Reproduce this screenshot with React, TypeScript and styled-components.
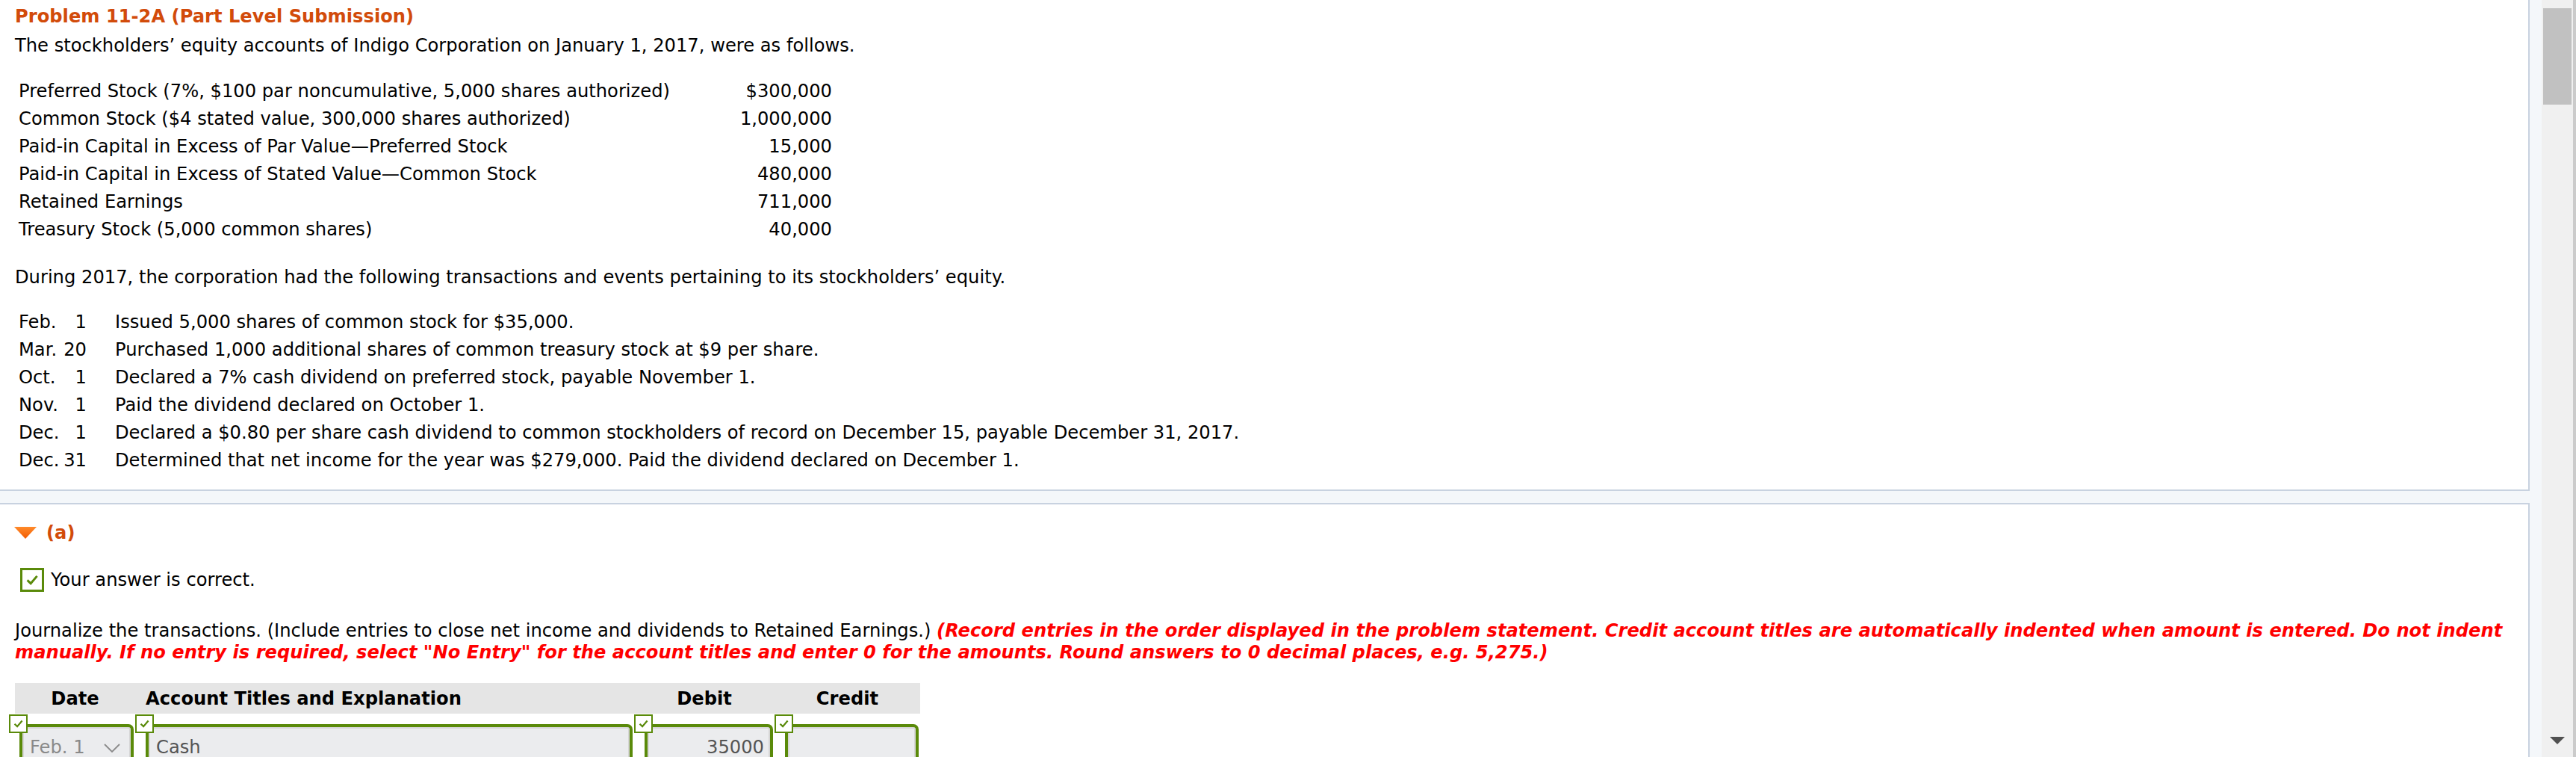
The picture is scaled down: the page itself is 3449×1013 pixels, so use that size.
import React from 'react';
import styled, { createGlobalStyle } from 'styled-components';

const GlobalStyle = createGlobalStyle`
  html, body {
    margin: 0;
    padding: 0;
    height: 100%;
    overflow: hidden;
  }
  body {
    font-family: 'DejaVu Sans', Verdana, sans-serif;
    font-size: 24.2px;
    color: #000;
    background: #f4f7fa;
  }
`;

const GREEN = '#5a8a0a';
const ORANGE = '#d24b0a';

const Window = styled.div`
  display: flex;
  height: 100vh;
  overflow: hidden;
`;

const Main = styled.main`
  flex: 1;
  min-width: 0;
  display: flex;
  flex-direction: column;
  gap: 16px;
  margin-left: -2px;
  padding-right: 16px;
  background: #f4f7fa;
`;

const Panel = styled.section<{ $scrolled?: boolean; $grow?: boolean }>`
  background: #fff;
  border: 2px solid #c8d2e0;
  border-top-width: ${p => (p.$scrolled ? 0 : 2)}px;
  padding: ${p => (p.$scrolled ? '7px 20px 20px' : '23px 20px 0')};
  flex: ${p => (p.$grow ? 1 : 'none')};
`;

const Title = styled.h2`
  margin: 0;
  font-size: 24.2px;
  line-height: 30px;
  font-weight: bold;
  color: ${ORANGE};
`;

const Para = styled.p<{ $top: number }>`
  margin: ${p => p.$top}px 0 0;
  line-height: 30px;
`;

const EquityTable = styled.div`
  display: grid;
  grid-template-columns: 900px 189px;
  margin: 28px 0 0 5px;
  line-height: 37px;
`;

const Amount = styled.div`
  text-align: right;
`;

const Transactions = styled.div`
  display: grid;
  grid-template-columns: 55px 36px 38px auto;
  margin: 27px 0 0 5px;
  line-height: 37px;
`;

const Day = styled.div`
  text-align: right;
`;

const Desc = styled.div`
  grid-column: 4;
`;

const PartHeader = styled.div`
  display: flex;
  align-items: center;
  gap: 13px;
  height: 30px;
  color: ${ORANGE};
  font-weight: bold;
`;

const Caret = styled.svg`
  width: 30px;
  height: 16px;
  margin-left: -1px;
`;

const Answer = styled.div`
  display: flex;
  align-items: center;
  gap: 9px;
  margin: 32px 0 0 7px;
  height: 32px;
`;

const CheckBox = styled.span<{ $size: number }>`
  display: inline-flex;
  align-items: center;
  justify-content: center;
  box-sizing: border-box;
  width: ${p => p.$size}px;
  height: ${p => p.$size}px;
  border: ${p => (p.$size > 28 ? 3 : 2)}px solid ${GREEN};
  background: #fff;
`;

const Instructions = styled.p`
  margin: 38px 0 0;
  line-height: 29px;
`;

const Warn = styled.span`
  color: #f00;
  font-weight: bold;
  font-style: italic;
`;

const JournalHead = styled.div`
  display: grid;
  grid-template-columns: 161px 668px 188px 195px;
  width: 1212px;
  margin-top: 26px;
  height: 41px;
  align-items: center;
  background: #e5e5e5;
  font-weight: bold;
`;

const HeadCell = styled.div<{ $left?: boolean }>`
  text-align: ${p => (p.$left ? 'left' : 'center')};
  padding-left: ${p => (p.$left ? 14 : 0)}px;
`;

const JournalRow = styled.div`
  display: grid;
  grid-template-columns: 169px 668px 188px 195px;
  width: 1220px;
  margin-left: -8px;
`;

const Cell = styled.div`
  position: relative;
  padding: 14px 2px 0 14px;
`;

const CellCheck = styled.div`
  position: absolute;
  top: 0;
  left: 0;
  z-index: 1;
`;

const Field = styled.div<{ $align?: 'left' | 'right'; $muted?: boolean }>`
  display: flex;
  align-items: flex-start;
  justify-content: ${p => (p.$align === 'right' ? 'flex-end' : 'space-between')};
  box-sizing: border-box;
  height: 64px;
  padding: 12px 8px 0 10px;
  border: 4px solid ${GREEN};
  border-bottom: none;
  border-radius: 7px 7px 0 0;
  background: #ebecee;
  box-shadow: inset 2px 2px 0 #d6d6d6, inset -2px 0 0 #d6d6d6;
  color: ${p => (p.$muted ? '#8a8a8a' : '#555')};
  line-height: 30px;
`;

const Chevron = styled.svg`
  width: 22px;
  height: 12px;
  margin: 10px 6px 0 0;
`;

const ScrollBar = styled.aside`
  width: 42px;
  flex: none;
  display: flex;
  flex-direction: column;
  justify-content: space-between;
  align-items: center;
  background: #f0f0f0;
  border-right: 4px solid #cbcbcb;
  padding: 11px 0 17px;
`;

const Thumb = styled.div`
  width: 38px;
  height: 129px;
  background: #c1c1c1;
`;

const ArrowDown = styled.svg`
  width: 20px;
  height: 10px;
`;

const Tick = ({ size }: { size: number }) => (
  <svg width={size} height={size} viewBox="0 0 12 12">
    <polyline points="2.5,6.2 5,8.6 9.6,3.2" fill="none" stroke={GREEN} strokeWidth="1.6" />
  </svg>
);

const equity: [string, string][] = [
  ['Preferred Stock (7%, $100 par noncumulative, 5,000 shares authorized)', '$300,000'],
  ['Common Stock ($4 stated value, 300,000 shares authorized)', '1,000,000'],
  ['Paid-in Capital in Excess of Par Value\u2014Preferred Stock', '15,000'],
  ['Paid-in Capital in Excess of Stated Value\u2014Common Stock', '480,000'],
  ['Retained Earnings', '711,000'],
  ['Treasury Stock (5,000 common shares)', '40,000'],
];

const events: [string, string, string][] = [
  ['Feb.', '1', 'Issued 5,000 shares of common stock for $35,000.'],
  ['Mar.', '20', 'Purchased 1,000 additional shares of common treasury stock at $9 per share.'],
  ['Oct.', '1', 'Declared a 7% cash dividend on preferred stock, payable November 1.'],
  ['Nov.', '1', 'Paid the dividend declared on October 1.'],
  ['Dec.', '1', 'Declared a $0.80 per share cash dividend to common stockholders of record on December 15, payable December 31, 2017.'],
  ['Dec.', '31', 'Determined that net income for the year was $279,000. Paid the dividend declared on December 1.'],
];

const JournalCell: React.FC<{ children?: React.ReactNode; align?: 'left' | 'right'; muted?: boolean }> = ({ children, align, muted }) => (
  <Cell>
    <CellCheck>
      <CheckBox $size={25}>
        <Tick size={17} />
      </CheckBox>
    </CellCheck>
    <Field $align={align} $muted={muted}>
      {children}
    </Field>
  </Cell>
);

const App: React.FC = () => (
  <Window>
    <GlobalStyle />
    <Main>
      <Panel $scrolled>
        <Title>Problem 11-2A (Part Level Submission)</Title>
        <Para $top={9}>The stockholders’ equity accounts of Indigo Corporation on January 1, 2017, were as follows.</Para>
        <EquityTable>
          {equity.map(([label, amount]) => (
            <React.Fragment key={label}>
              <div>{label}</div>
              <Amount>{amount}</Amount>
            </React.Fragment>
          ))}
        </EquityTable>
        <Para $top={30}>During 2017, the corporation had the following transactions and events pertaining to its stockholders’ equity.</Para>
        <Transactions>
          {events.map(([month, day, text]) => (
            <React.Fragment key={month + day}>
              <div>{month}</div>
              <Day>{day}</Day>
              <Desc>{text}</Desc>
            </React.Fragment>
          ))}
        </Transactions>
      </Panel>
      <Panel $grow>
        <PartHeader>
          <Caret viewBox="0 0 30 16">
            <defs>
              <linearGradient id="caretFill" x1="0" y1="0" x2="0" y2="1">
                <stop offset="0" stopColor="#ff8a2a" />
                <stop offset="1" stopColor="#f25a00" />
              </linearGradient>
            </defs>
            <polygon points="0,0 30,0 15,16" fill="url(#caretFill)" />
          </Caret>
          <span>(a)</span>
        </PartHeader>
        <Answer>
          <CheckBox $size={32}>
            <Tick size={22} />
          </CheckBox>
          <span>Your answer is correct.</span>
        </Answer>
        <Instructions>
          Journalize the transactions. (Include entries to close net income and dividends to Retained Earnings.){' '}
          <Warn>
            (Record entries in the order displayed in the problem statement. Credit account titles are automatically indented when amount is entered. Do not indent manually. If no entry is required, select "No Entry" for the account titles and enter 0 for the amounts. Round answers to 0 decimal places, e.g. 5,275.)
          </Warn>
        </Instructions>
        <JournalHead>
          <HeadCell>Date</HeadCell>
          <HeadCell $left>Account Titles and Explanation</HeadCell>
          <HeadCell>Debit</HeadCell>
          <HeadCell>Credit</HeadCell>
        </JournalHead>
        <JournalRow>
          <JournalCell muted>
            <span>Feb. 1</span>
            <Chevron viewBox="0 0 22 12">
              <polyline points="1,1 11,11 21,1" fill="none" stroke="#8a8a8a" strokeWidth="1.8" />
            </Chevron>
          </JournalCell>
          <JournalCell>Cash</JournalCell>
          <JournalCell align="right">35000</JournalCell>
          <JournalCell />
        </JournalRow>
      </Panel>
    </Main>
    <ScrollBar>
      <Thumb />
      <ArrowDown viewBox="0 0 20 10">
        <polygon points="0,0 20,0 10,10" fill="#505050" />
      </ArrowDown>
    </ScrollBar>
  </Window>
);

export default App;
